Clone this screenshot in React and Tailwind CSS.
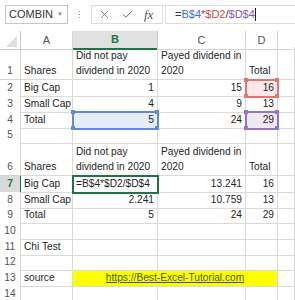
import { X, Check } from 'lucide-react';

// column layout: row header, A, B, C, D, E
const COLS = 'grid-cols-[21px_52px_85px_88px_32px_1fr]';

const rows = [
  { n: 1, h: 'h-[33px]', cells: ['Shares', ['Did not pay', 'dividend in 2020'], ['Payed dividend in', '2020'], 'Total', ''] },
  { n: 2, h: 'h-[16px]', cells: ['Big Cap', { v: '1', r: true }, { v: '15', r: true }, { v: '16', r: true, sel: 'red' }, ''] },
  { n: 3, h: 'h-[16px]', cells: ['Small Cap', { v: '4', r: true }, { v: '9', r: true }, { v: '13', r: true }, ''] },
  { n: 4, h: 'h-[15px]', cells: ['Total', { v: '5', r: true, sel: 'blue' }, { v: '24', r: true }, { v: '29', r: true, sel: 'purple' }, ''] },
  { n: 5, h: 'h-[16px]', cells: ['', '', '', '', ''] },
  { n: 6, h: 'h-[33px]', cells: ['Shares', ['Did not pay', 'dividend in 2020'], ['Payed dividend in', '2020'], 'Total', ''] },
  { n: 7, h: 'h-[16px]', active: true, cells: ['Big Cap', { v: 'edit', sel: 'green' }, { v: '13.241', r: true }, { v: '16', r: true }, ''] },
  { n: 8, h: 'h-[15px]', cells: ['Small Cap', { v: '2.241', r: true }, { v: '10.759', r: true }, { v: '13', r: true }, ''] },
  { n: 9, h: 'h-[16px]', cells: ['Total', { v: '5', r: true }, { v: '24', r: true }, { v: '29', r: true }, ''] },
  { n: 10, h: 'h-[16px]', cells: ['', '', '', '', ''] },
  { n: 11, h: 'h-[15px]', cells: ['Chi Test', '', '', '', ''] },
  { n: 12, h: 'h-[16px]', cells: ['', '', '', '', ''] },
  { n: 13, h: 'h-[16px]', link: true, cells: ['source'] },
  { n: 14, h: 'h-[16px]', cells: ['', '', '', '', ''] },
];

const selStyles = {
  blue: 'bg-[#e6edf9] outline outline-2 -outline-offset-1 outline-[#5b8bd9]',
  red: 'bg-[#fbe9e9] outline outline-2 -outline-offset-1 outline-[#e27474]',
  purple: 'bg-[#eee8f6] outline outline-2 -outline-offset-1 outline-[#9474c4]',
  green: 'outline outline-2 -outline-offset-1 outline-[#217346]',
};

const handleColor = {
  blue: 'bg-[#5b8bd9]',
  red: 'bg-[#e27474]',
  purple: 'bg-[#9474c4]',
};

function Handles({ color }) {
  const c = handleColor[color];
  if (!c) return null;
  return (
    <>
      <span className={`absolute -left-[2px] -top-[2px] w-[4px] h-[4px] ${c}`} />
      <span className={`absolute -right-[2px] -top-[2px] w-[4px] h-[4px] ${c}`} />
      <span className={`absolute -left-[2px] -bottom-[2px] w-[4px] h-[4px] ${c}`} />
      <span className={`absolute -right-[2px] -bottom-[2px] w-[4px] h-[4px] ${c}`} />
    </>
  );
}

function Cell({ c }) {
  const base = 'relative border-r border-b border-[#dadada] flex items-end px-[3px] leading-[15px] whitespace-nowrap';
  if (Array.isArray(c)) {
    return (
      <div className={base}>
        <div className="flex flex-col pb-[1px]">
          {c.map((l) => <span key={l}>{l}</span>)}
        </div>
      </div>
    );
  }
  if (c && typeof c === 'object') {
    if (c.v === 'edit') {
      return (
        <div className={`${base} ${selStyles.green} z-10`}>
          <span className="pb-[1px]">=B$4*$D2/$D$4</span>
        </div>
      );
    }
    return (
      <div className={`${base} ${c.r ? 'justify-end' : ''} ${c.sel ? selStyles[c.sel] + ' z-10' : ''}`}>
        <span className="pb-[1px]">{c.v}</span>
        {c.sel && <Handles color={c.sel} />}
      </div>
    );
  }
  return (
    <div className={base}>
      <span className="pb-[1px]">{c}</span>
    </div>
  );
}

function RowHeader({ n, active }) {
  return (
    <div
      className={`flex items-end justify-center leading-[15px] pb-[1px] border-b border-r ${
        active
          ? 'bg-[#dadada] text-[#217346] font-bold border-b-[#c6c6c6] border-r-[#217346]'
          : 'bg-white text-[#555] border-[#d4d4d4]'
      }`}
    >
      {n}
    </div>
  );
}

export default function App() {
  return (
    <div className="w-[295px] h-[300px] overflow-hidden bg-white text-[10.2px] text-[#1f1f1f] font-['Liberation_Sans',Arial,sans-serif]">
      {/* Formula bar */}
      <div className="flex items-center h-[31px] pl-[5px] pb-[2px]">
        <div className="w-[63px] h-[19px] border border-[#c6c6c6] flex items-center justify-between pl-[3px] pr-[4px] text-[11px] text-[#333]">
          <span>COMBIN</span>
          <span className="text-[6px] text-[#888]">▼</span>
        </div>
        <div className="w-[23px] flex flex-col items-center gap-[2px]">
          <span className="w-[1px] h-[1px] bg-[#999]" />
          <span className="w-[1px] h-[1px] bg-[#999]" />
          <span className="w-[1px] h-[1px] bg-[#999]" />
        </div>
        <div className="w-[72px] h-[19px] border border-[#dcdcdc] flex items-center gap-[10px] pl-[6px] text-[#666]">
          <X size={13} strokeWidth={1.4} />
          <Check size={13} strokeWidth={1.8} />
          <span className="italic text-[13px] text-[#555] font-['Liberation_Serif',serif] leading-none">fx</span>
        </div>
        <div className="flex-1 ml-[2px] h-[19px] border border-[#dcdcdc] border-r-0 flex items-center pl-[9px] text-[11px]">
          <span className="text-[#333]">=</span>
          <span className="text-[#3d6fcf]">B$4</span>
          <span className="text-[#c03030]">*</span>
          <span className="text-[#d94848]">$D2</span>
          <span className="text-[#333]">/</span>
          <span className="text-[#8359b8]">$D$4</span>
          <span className="w-[1px] h-[13px] bg-[#222]" />
        </div>
      </div>

      {/* Column headers */}
      <div className={`grid ${COLS} h-[16px] text-[#555] text-[11px]`}>
        <div className="relative border-r border-b border-[#c8c8c8] bg-white">
          <svg className="absolute right-[3px] bottom-[2px]" width="11" height="11" viewBox="0 0 11 11">
            <polygon points="11,0 11,11 0,11" fill="#dedede" />
          </svg>
        </div>
        <div className="flex items-center justify-center border-r border-b border-[#d4d4d4]">A</div>
        <div className="flex items-center justify-center bg-[#e1e1e1] border-r border-[#c8c8c8] border-b-2 border-b-[#217346] text-[#217346] font-bold">B</div>
        <div className="flex items-center justify-center border-r border-b border-[#d4d4d4]">C</div>
        <div className="flex items-center justify-center border-r border-b border-[#d4d4d4]">D</div>
        <div className="border-b border-[#d4d4d4]" />
      </div>

      {/* Sheet body */}
      {rows.map((row) => (
        <div key={row.n} className={`grid ${COLS} ${row.h}`}>
          <RowHeader n={row.n} active={row.active} />
          {row.link ? (
            <>
              <Cell c={row.cells[0]} />
              <div className="col-span-3 bg-[#ffff00] border-r border-b border-[#dadada] flex items-end justify-center leading-[15px]">
                <span className="underline text-[#3c5a3a] pb-[1px]">https://Best-Excel-Tutorial.com</span>
              </div>
              <Cell c="" />
            </>
          ) : (
            row.cells.map((c, i) => <Cell key={i} c={c} />)
          )}
        </div>
      ))}
    </div>
  );
}
